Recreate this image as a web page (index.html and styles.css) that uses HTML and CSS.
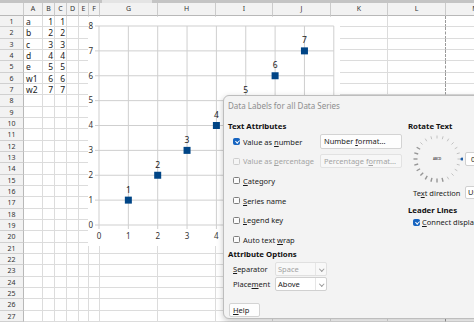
FILE: index.html
```html
<!DOCTYPE html>
<html lang="en">
<head>
    <meta charset="UTF-8">
    <meta name="viewport" content="width=device-width, initial-scale=1.0">
    <title>Data Labels for all Data Series</title>
    <link rel="stylesheet" href="styles.css">
</head>
<body>
    <div class="topbar"><div class="thumb"></div></div>
    <div class="sheet" id="sheet">
        <!-- Cells are generated below -->
    </div>

    <svg class="chart" id="chart" width="252" height="229" viewBox="88 17 252 229"></svg>

    <div class="dialog">
        <div class="dlg-title">Data Labels for all Data Series</div>
        <div class="dlg-body">
            <div class="col-left">
                <div class="section">Text Attributes</div>
                <div class="check-row">
                    <span class="check"><span class="box on"></span><span>Value as <u>n</u>umber</span></span>
                    <span class="btn">Number <u>f</u>ormat...</span>
                </div>
                <div class="check-row disabled">
                    <span class="check"><span class="box"></span><span>Value as <u>p</u>ercentage</span></span>
                    <span class="btn">Percentage f<u>o</u>rmat...</span>
                </div>
                <div class="check-row"><span class="check"><span class="box"></span><span><u>C</u>ategory</span></span></div>
                <div class="check-row"><span class="check"><span class="box"></span><span><u>S</u>eries name</span></span></div>
                <div class="check-row"><span class="check"><span class="box"></span><span><u>L</u>egend key</span></span></div>
                <div class="check-row"><span class="check"><span class="box"></span><span>Auto text <u>w</u>rap</span></span></div>

                <div class="section attr">Attribute Options</div>
                <div class="form-row">
                    <span class="lbl"><u>S</u>eparator</span>
                    <span class="select disabled">Space<span class="caret"></span></span>
                </div>
                <div class="form-row">
                    <span class="lbl">Place<u>m</u>ent</span>
                    <span class="select">Above<span class="caret"></span></span>
                </div>
                <span class="btn help"><u>H</u>elp</span>
            </div>

            <div class="col-right">
                <div class="section">Rotate Text</div>
                <div class="dial-row">
                    <svg class="dial" id="dial" width="52" height="50" viewBox="-26 -25 52 50"></svg>
                    <span class="field">0</span>
                </div>
                <div class="form-row dir-row">
                    <span class="lbl wide">Te<u>x</u>t direction</span>
                    <span class="field">Use superordinate object settings</span>
                </div>
                <div class="section">Leader Lines</div>
                <div class="check-row right"><span class="check"><span class="box on"></span><span><u>C</u>onnect displaced data labels to data points</span></span></div>
            </div>
        </div>
    </div>

    <script>
        document.addEventListener("DOMContentLoaded", function () {
            const sheet = document.getElementById("sheet");
            const chart = document.getElementById("chart");
            const dial = document.getElementById("dial");

            const columns = ["A", "B", "C", "D", "E", "F", "G", "H", "I", "J", "K", "L", "M"];
            const data = [["a", 1, 1], ["b", 2, 2], ["c", 3, 3], ["d", 4, 4], ["e", 5, 5], ["w1", 6, 6], ["w2", 7, 7]];

            let html = '<div class="corner"></div>';
            columns.forEach(c => html += `<div class="col-hdr">${c}</div>`);
            for (let r = 1; r <= 27; r++) {
                html += `<div class="row-hdr">${r}</div>`;
                const row = data[r - 1] || [];
                columns.forEach((c, i) => {
                    const value = row[i] !== undefined ? row[i] : "";
                    let cls = "cell";
                    if (typeof value === "number") cls += " num";
                    if (c === "L") cls += " page-break";
                    html += `<div class="${cls}">${value}</div>`;
                });
            }
            sheet.innerHTML = html;

            // chart: x from 0..8, y from 0..8
            const x0 = 99, dx = 29.35, y0 = 225, dy = 24.875;
            let svg = '<rect x="88" y="17" width="252" height="229" fill="#fff"/>';
            for (let i = 0; i <= 8; i++) {
                const x = x0 + i * dx;
                const y = y0 - i * dy;
                svg += `<line class="grid" x1="${x}" y1="${y0 - 8 * dy}" x2="${x}" y2="${y0 + 4}"/>`;
                svg += `<line class="grid" x1="${x0 - 4}" y1="${y}" x2="${x0 + 8 * dx}" y2="${y}"/>`;
                svg += `<text class="axis" x="${x}" y="${y0 + 14}" text-anchor="middle">${i}</text>`;
                svg += `<text class="axis" x="${x0 - 6}" y="${y + 2.8}" text-anchor="end">${i}</text>`;
            }
            for (let v = 1; v <= 7; v++) {
                const x = x0 + v * dx;
                const y = y0 - v * dy;
                svg += `<rect class="point" x="${x - 3.5}" y="${y - 3.5}" width="7" height="7"/>`;
                svg += `<text class="label" x="${x}" y="${y - 7.5}" text-anchor="middle">${v}</text>`;
            }
            chart.innerHTML = svg;

            // rotation dial
            let ticks = '';
            for (let a = 0; a < 360; a += 15) {
                const rad = a * Math.PI / 180;
                const dark = a >= 150 && a <= 285;
                const r1 = dark ? 19.5 : 20.5;
                const cx = Math.cos(rad), cy = -Math.sin(rad);
                ticks += `<line class="${dark ? 'tick dark' : 'tick'}" x1="${cx * r1}" y1="${cy * r1}" x2="${cx * 23.5}" y2="${cy * 23.5}"/>`;
            }
            ticks += '<text class="abcd" x="0" y="1" text-anchor="middle">ABCD</text>';
            ticks += '<circle cx="25" cy="0" r="1.6" fill="#1f5fa8"/>';
            dial.innerHTML = ticks;
        });
    </script>
</body>
</html>
```

FILE: styles.css
```css
html, body {
    margin: 0;
    padding: 0;
}
body {
    width: 474px;
    height: 322px;
    overflow: hidden;
    position: relative;
    background: #ffffff;
    font-family: "Noto Sans", "Liberation Sans", sans-serif;
    color: #1b1b1b;
}
.topbar {
    height: 3px;
    background: #c4c4c4;
}
.topbar .thumb {
    margin-left: 102px;
    width: 50px;
    height: 3px;
    background: #e4e4e4;
}

/* spreadsheet */
.sheet {
    display: grid;
    grid-template-columns: 24px 19px 12px 12px 12px 10px 11px 58px 58px 57px 58px 57px 58px 60px;
    grid-template-rows: 13px repeat(27, 11.33px);
    width: 506px;
    font-size: 8.5px;
}
.sheet > div {
    box-sizing: border-box;
    overflow: hidden;
    white-space: nowrap;
}
.corner, .col-hdr {
    background: #f2f2f2;
    border-right: 1px solid #cbcbcb;
    border-bottom: 1px solid #b8b8b8;
}
.col-hdr {
    text-align: center;
    font-size: 7px;
    line-height: 12px;
    color: #333;
}
.row-hdr {
    background: #f2f2f2;
    border-right: 1px solid #b8b8b8;
    border-bottom: 1px solid #d0d0d0;
    text-align: center;
    font-size: 7px;
    line-height: 11px;
    color: #333;
}
.cell {
    border-right: 1px solid #dcdcdc;
    border-bottom: 1px solid #dcdcdc;
    line-height: 11px;
    padding: 0 1px 0 2px;
}
.cell.num {
    text-align: right;
}
.cell.page-break {
    border-right: 1px dashed #9a9a9a;
}

/* chart */
.chart {
    position: absolute;
    left: 88px;
    top: 17px;
    font-family: "Noto Sans", "Liberation Sans", sans-serif;
}
.chart .grid {
    stroke: #cfcfcf;
    stroke-width: 1;
}
.chart .axis {
    font-size: 8px;
    fill: #333;
}
.chart .label {
    font-size: 8.5px;
    fill: #1b1b1b;
}
.chart .point {
    fill: #004586;
}

/* dialog */
.dialog {
    position: absolute;
    left: 223px;
    top: 95px;
    width: 270px;
    height: 224px;
    box-sizing: border-box;
    background: #f3f3f3;
    border: 1px solid #bdbdbd;
    border-radius: 6px 0 0 6px;
    box-shadow: 0 2px 6px rgba(0, 0, 0, 0.22);
    font-size: 7.5px;
}
.dlg-title {
    height: 20px;
    line-height: 20px;
    padding-left: 4px;
    font-size: 8px;
    color: #8e8e8e;
}
.dlg-body {
    display: flex;
    padding-left: 4px;
}
.col-left {
    width: 180px;
    flex-shrink: 0;
}
.col-right {
    flex: 1;
    white-space: nowrap;
}
.section {
    font-weight: 700;
    font-size: 7.8px;
    line-height: 12px;
    margin-top: 4px;
    color: #111;
}
.section.attr {
    line-height: 10px;
    margin-top: -1px;
    margin-bottom: 3px;
}
.check-row {
    display: flex;
    align-items: center;
    height: 19.6px;
    padding-left: 5px;
}
.check-row.right {
    height: 11px;
    margin-top: 1px;
}
.check {
    display: flex;
    align-items: center;
    flex: 1;
    white-space: nowrap;
}
.box {
    width: 7px;
    height: 7px;
    box-sizing: border-box;
    border: 1px solid #7d7d7d;
    border-radius: 1.5px;
    background: #fbfbfb;
    margin-right: 3px;
    position: relative;
    flex-shrink: 0;
}
.col-right .box {
    margin-right: 2px;
}
.box.on {
    background: #1664c0;
    border-color: #1664c0;
}
.box.on::after {
    content: "";
    position: absolute;
    left: 1.6px;
    top: 0;
    width: 1.6px;
    height: 3.3px;
    border-right: 1px solid #fff;
    border-bottom: 1px solid #fff;
    transform: rotate(45deg);
}
.disabled {
    color: #a3a3a3;
}
.disabled .box {
    border-color: #cdcdcd;
    background: #f5f5f5;
}
.btn {
    display: inline-block;
    box-sizing: border-box;
    width: 82px;
    height: 15px;
    line-height: 13px;
    margin-right: 6px;
    padding-left: 3px;
    background: #fdfdfd;
    border: 1px solid #d3d3d3;
    border-radius: 2px;
    white-space: nowrap;
    overflow: hidden;
}
.disabled .btn {
    height: 14px;
    background: #f7f7f7;
    border-color: #e2e2e2;
}
.btn.help {
    width: 31px;
    height: 14px;
    margin-top: 11px;
    margin-left: 1px;
    padding-left: 3px;
}
.form-row {
    display: flex;
    align-items: center;
    height: 15px;
    padding-left: 5px;
}
.lbl {
    width: 42px;
    flex-shrink: 0;
}
.lbl.wide {
    width: 52px;
}
.select {
    position: relative;
    box-sizing: border-box;
    width: 52px;
    height: 14px;
    line-height: 12px;
    padding-left: 2px;
    background: #fff;
    border: 1px solid #d0d0d0;
    border-radius: 2px;
}
.select.disabled {
    background: #f8f8f8;
    border-color: #e0e0e0;
}
.caret {
    position: absolute;
    right: 0;
    top: 0;
    width: 10px;
    height: 12px;
    border-left: 1px solid #e6e6e6;
}
.caret::after {
    content: "";
    position: absolute;
    left: 3.5px;
    top: 3.5px;
    width: 2.5px;
    height: 2.5px;
    border-right: 1px solid #9a9a9a;
    border-bottom: 1px solid #9a9a9a;
    transform: rotate(45deg);
}
.dial-row {
    display: flex;
    align-items: center;
    margin-top: 2px;
}
.dial {
    margin-left: 3px;
    flex-shrink: 0;
}
.dial .tick {
    stroke: #c2c2c2;
    stroke-width: 1;
}
.dial .tick.dark {
    stroke: #969696;
    stroke-width: 1.4;
}
.dial .abcd {
    font-size: 3px;
    font-weight: 700;
    fill: #555;
}
.field {
    box-sizing: border-box;
    display: inline-block;
    width: 40px;
    height: 14px;
    line-height: 12px;
    margin-left: 2px;
    padding-left: 5px;
    background: #fff;
    border: 1px solid #d0d0d0;
    border-radius: 2px;
    white-space: nowrap;
    overflow: hidden;
}
.dir-row {
    margin-top: 1.5px;
    height: 14px;
}
.dir-row .field {
    margin-left: 0;
    padding-left: 2px;
    height: 13px;
    line-height: 11px;
}
u {
    text-decoration-thickness: 0.6px;
    text-underline-offset: 1px;
}
```
